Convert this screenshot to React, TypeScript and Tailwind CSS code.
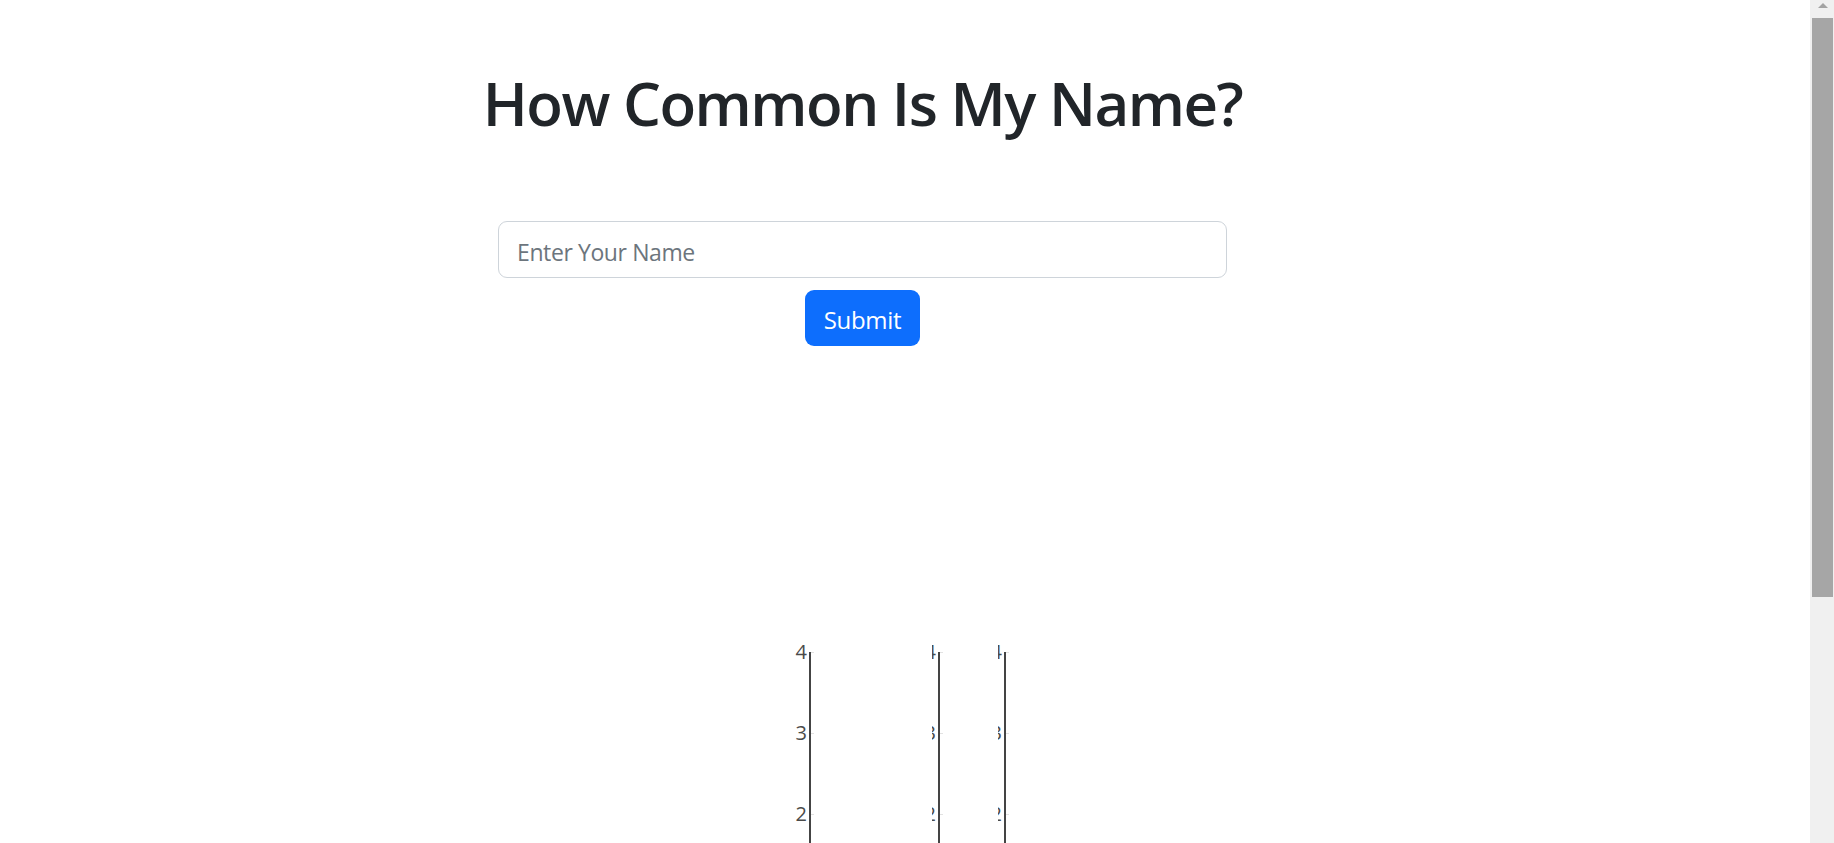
const ticks = ["4", "3", "2", "1", "0"];

function AxisChart({ labelWidth, className }: { labelWidth: string; className: string }) {
  return (
    <div className={`flex items-start ${className}`}>
      {/* y labels, centered on their grid lines; narrow columns clip from the left */}
      <div className={`flex flex-col ${labelWidth}`}>
        {ticks.map((t) => (
          <div key={t} className="h-[81px] flex justify-end overflow-hidden">
            <span className="text-[20px] leading-[18px] text-[#4a4a4a] font-['Open_Sans',sans-serif] pr-[2px]">
              {t}
            </span>
          </div>
        ))}
      </div>
      <div className="mt-[9px] w-[6px] border-l-2 border-[#444] flex flex-col">
        {ticks.map((t) => (
          <div key={t} className="h-[81px]">
            <div className="h-px w-[3px] bg-[#e2e2e2]" />
          </div>
        ))}
      </div>
    </div>
  );
}

function Scrollbar() {
  return (
    <aside className="w-[24px] h-[843px] bg-[#f0f0f0] flex flex-col shrink-0">
      <div className="h-[18px] flex justify-center pt-[3px] pl-[1px]">
        <svg width="10" height="5" viewBox="0 0 10 5">
          <polygon points="5,0 10,5 0,5" fill="#a3a3a3" />
        </svg>
      </div>
      <div className="ml-[2px] w-[21px] h-[579px] bg-[#a6a6a6]" />
    </aside>
  );
}

export default function App() {
  return (
    <div className="flex w-full h-[843px] bg-white overflow-hidden font-['Open_Sans','Noto_Sans',sans-serif]">
      <main className="flex-1 h-[843px] overflow-hidden">
        <div className="ml-[498px] w-[729px] flex flex-col">
          <h1 className="-mx-[60px] pt-[67px] text-[60px] leading-[72px] font-semibold text-[#212529] text-center whitespace-nowrap tracking-[-1.5px]">
            How Common Is My Name?
          </h1>

          <form className="mt-[82px] flex flex-col items-center" onSubmit={(e) => e.preventDefault()}>
            <input
              type="text"
              placeholder="Enter Your Name"
              className="w-full h-[57px] pl-[18px] pr-[18px] pt-[4px] text-[23px] tracking-[-0.4px] text-[#212529] placeholder:text-[#6c757d] border border-[#ced4da] rounded-[9px] outline-none"
            />
            <button
              type="submit"
              className="mt-[12px] w-[115px] h-[56px] pt-[3px] rounded-[9px] bg-[#0d6efd] text-white text-[24px] tracking-[-0.3px]"
            >
              Submit
            </button>
          </form>

          {/* three squeezed bar charts: only the y axes show */}
          <div className="mt-[297px] flex items-start">
            <AxisChart labelWidth="w-[31px]" className="ml-[280px]" />
            <AxisChart labelWidth="w-[6px]" className="ml-[117px]" />
            <AxisChart labelWidth="w-[6px]" className="ml-[54px]" />
          </div>
        </div>
      </main>
      <Scrollbar />
    </div>
  );
}
